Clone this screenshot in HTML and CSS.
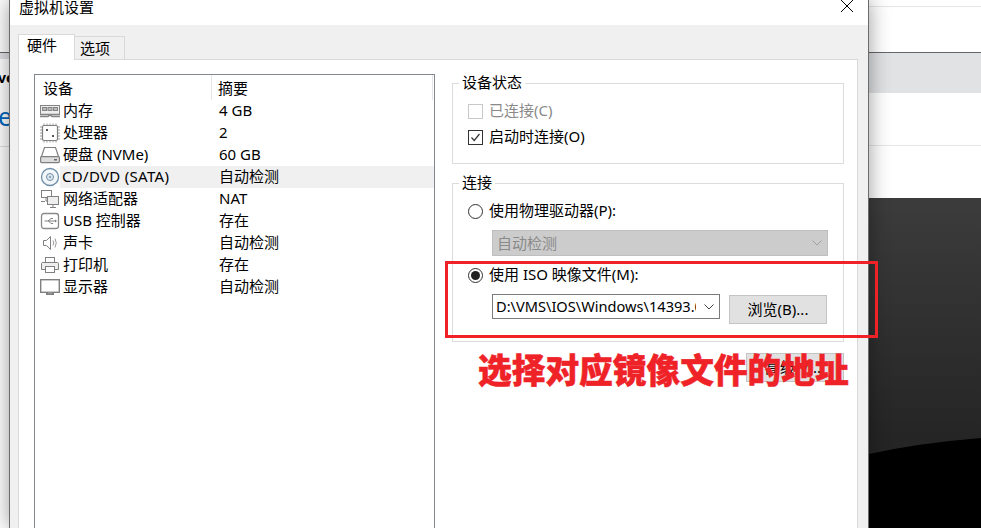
FILE: index.html
```html
<!DOCTYPE html>
<html lang="zh-CN">
<head>
<meta charset="utf-8">
<title>虚拟机设置</title>
<link rel="stylesheet" href="styles.css">
</head>
<body>
<div class="backdrop">
  <div class="bg-left">
    <div class="bl-top"></div>
    <div class="bl-band"></div>
    <div class="bl-name">ve</div>
    <div class="bl-link">e</div>
  </div>
  <div class="bg-right">
    <div class="br-a"></div>
    <div class="br-b"></div>
    <div class="br-band"></div>
    <div class="br-c"></div>
    <div class="br-d"></div>
    <div class="hero">
      <svg class="hero-curve" viewBox="0 0 112 90"><path d="M0 16Q50 5 112 0V90H0Z" fill="#000"/></svg>
    </div>
  </div>
</div>

<div class="dialog">
  <div class="titlebar">
    <span class="title">虚拟机设置</span>
    <svg class="close" viewBox="0 0 12 12"><path d="M0 0L12 12M12 0L0 12" stroke="#000" stroke-width="1" fill="none"/></svg>
  </div>
  <div class="client">
    <div class="tabs">
      <div class="tab active">硬件</div>
      <div class="tab">选项</div>
    </div>
    <div class="panel">
      <div class="list">
        <div class="list-head">
          <div class="hd-name">设备</div>
          <div class="hd-val">摘要</div>
        </div>
        <div class="row">
          <svg class="ic" viewBox="0 0 20 20"><g fill="none" stroke="#858585"><rect x="0.500" y="4.500" width="19" height="9" fill="#eee"/><rect x="2.500" y="6.500" width="4" height="3" fill="#bbb"/><rect x="8" y="6.500" width="4" height="3" fill="#bbb"/><rect x="13.500" y="6.500" width="4" height="3" fill="#bbb"/><path d="M0 13.500H20M0 15.500H8L9 14.500H11L12 15.500H20" stroke-width="1.400"/></g></svg>
          <div class="cells"><span class="name">内存</span><span class="val">4 GB</span></div>
        </div>
        <div class="row">
          <svg class="ic" viewBox="0 0 20 20"><g fill="none"><rect x="2.500" y="2.500" width="15" height="15" rx="1.500" fill="#fff" stroke="#808080" stroke-width="1.200"/><path d="M4 0.500V2M7 0.500V2M10 0.500V2M13 0.500V2M16 0.500V2M4 18V19.500M7 18V19.500M10 18V19.500M13 18V19.500M16 18V19.500M0 4H2M0 7H2M0 10H2M0 13H2M0 16H2M18 4H20M18 7H20M18 10H20M18 13H20M18 16H20" stroke="#999"/><rect x="6" y="6" width="2" height="2" fill="#555"/><rect x="12" y="12" width="2" height="2" fill="#555"/></g></svg>
          <div class="cells"><span class="name">处理器</span><span class="val">2</span></div>
        </div>
        <div class="row">
          <svg class="ic" viewBox="0 0 20 20"><g fill="none" stroke="#808080" stroke-width="1.200"><path d="M4.500 2.500H15.500L18.500 11.500H1.500Z" fill="#fff"/><rect x="0.600" y="11.600" width="18.800" height="6" rx="1" fill="#ddd"/></g><rect x="14" y="14" width="3" height="1.500" fill="#666"/></svg>
          <div class="cells"><span class="name">硬盘 (NVMe)</span><span class="val">60 GB</span></div>
        </div>
        <div class="row selected">
          <svg class="ic" viewBox="0 0 20 20"><g fill="none" stroke="#6f8fa8"><circle cx="10" cy="10" r="8.500" fill="#f4f7fa" stroke-width="1.300"/><circle cx="10" cy="10" r="3.500" fill="#dfe6ec"/></g><circle cx="10" cy="10" r="1" fill="#6f8fa8"/></svg>
          <div class="cells"><span class="name name-wide">CD/DVD (SATA)</span><span class="val">自动检测</span></div>
        </div>
        <div class="row">
          <svg class="ic" viewBox="0 0 20 20"><g fill="none" stroke="#808080"><rect x="1.500" y="1.500" width="10" height="7" fill="#fff"/><rect x="7.500" y="7.500" width="11" height="8" fill="#eee"/><path d="M13 15.500V18M10 18.500H16M6 8.500V12H7M1 12.500H5"/></g></svg>
          <div class="cells"><span class="name">网络适配器</span><span class="val">NAT</span></div>
        </div>
        <div class="row">
          <svg class="ic" viewBox="0 0 20 20"><rect x="1.500" y="2.500" width="17" height="15" rx="2.500" fill="#fff" stroke="#8a8a8a" stroke-width="1.300"/><path d="M4.500 10H15M8 10L11 7.500H13M8.500 10L11 12.500H13" fill="none" stroke="#808080"/><path d="M15 8.500L17 10L15 11.500Z" fill="#808080"/></svg>
          <div class="cells"><span class="name">USB 控制器</span><span class="val">存在</span></div>
        </div>
        <div class="row">
          <svg class="ic" viewBox="0 0 20 20"><path d="M3.500 7.500H6.500L10.500 3.500V16.500L6.500 12.500H3.500Z" fill="#fff" stroke="#808080"/><path d="M13 7.500Q14.500 10 13 12.500M15 5.500Q17.500 10 15 14.500" fill="none" stroke="#999"/></svg>
          <div class="cells"><span class="name">声卡</span><span class="val">自动检测</span></div>
        </div>
        <div class="row">
          <svg class="ic" viewBox="0 0 20 20"><g fill="none" stroke="#808080"><rect x="5.500" y="2.500" width="9" height="5" fill="#fff"/><path d="M5 14.500H1.500V8.500Q1.500 7.500 2.500 7.500H17.500Q18.500 7.500 18.500 8.500V14.500H15" fill="#eee"/><rect x="5.500" y="11.500" width="9" height="6" fill="#fff"/></g></svg>
          <div class="cells"><span class="name">打印机</span><span class="val">存在</span></div>
        </div>
        <div class="row">
          <svg class="ic" viewBox="0 0 20 20"><rect x="0.700" y="2.700" width="18.600" height="12.600" fill="#fff" stroke="#808080" stroke-width="1.400"/><path d="M6 17H14" stroke="#808080" stroke-width="2"/><path d="M8 16H12" stroke="#aaa"/></svg>
          <div class="cells"><span class="name">显示器</span><span class="val">自动检测</span></div>
        </div>
      </div>

      <div class="side">
        <fieldset class="group group-status">
          <legend>设备状态</legend>
          <div class="opt disabled"><span class="check"></span><span class="label">已连接(C)</span></div>
          <div class="opt"><span class="check on"><svg viewBox="0 0 13 13"><path d="M2.500 6.500L5.200 9.500L10.500 3" fill="none" stroke="#333" stroke-width="1.200"/></svg></span><span class="label">启动时连接(O)</span></div>
        </fieldset>
        <fieldset class="group group-conn">
          <legend>连接</legend>
          <div class="opt"><span class="radio"></span><span class="label">使用物理驱动器(P):</span></div>
          <div class="select off"><span class="sel-text">自动检测</span><svg class="chev" viewBox="0 0 10 6"><path d="M0.500 0.500L5 5L9.500 0.500" fill="none" stroke="#a0a0a0"/></svg></div>
          <div class="opt opt-iso"><span class="radio on"></span><span class="label">使用 ISO 映像文件(M):</span></div>
          <div class="iso-row">
            <div class="select file"><span class="sel-text">D:\VMS\IOS\Windows\14393.0</span><svg class="chev" viewBox="0 0 10 6"><path d="M0.500 0.500L5 5L9.500 0.500" fill="none" stroke="#444"/></svg></div>
            <div class="btn">浏览(B)...</div>
          </div>
        </fieldset>
        <div class="adv-row"><div class="btn">高级(V)...</div></div>
      </div>
    </div>
  </div>
</div>

<div class="mark-box"></div>
<div class="mark-text">选择对应镜像文件的地址</div>
</body>
</html>
```

FILE: styles.css
```css
* { box-sizing: border-box; }
html, body { margin: 0; height: 528px; overflow: hidden; background: #fff; }
body { position: relative; font-family: "Noto Sans", "Noto Sans CJK SC", sans-serif; font-size: 15px; color: #000; }

.backdrop { display: flex; height: 528px; }
.bg-left { width: 400px; display: flex; flex-direction: column; overflow: hidden; }
.bl-top { height: 53px; border-bottom: 1px solid #666; }
.bl-band { height: 6px; background: #e1e2e4; }
.bl-name { font-weight: 700; font-size: 14px; line-height: 20px; margin: 9px 0 0 -2px; }
.bl-link { color: #0067c0; font-size: 25px; line-height: 30px; margin: 13px 0 0 -2px; padding-bottom: 15px; border-bottom: 1px solid #e0e0e0; }
.bg-right { flex: 1; display: flex; flex-direction: column; }
.br-a { height: 7px; border-bottom: 1px solid #e6e6e6; }
.br-b { height: 46px; border-bottom: 1px solid #666; }
.br-band { height: 40px; background: #e1e2e4; }
.br-c { height: 53px; border-bottom: 1px solid #e6e6e6; }
.br-d { height: 52px; }
.hero { flex: 1; position: relative; background: linear-gradient(#3c3c3c, #252525 240px); }
.hero-curve { position: absolute; right: 0; bottom: 0; width: 112px; height: 90px; display: block; }

.dialog { position: absolute; left: 9px; top: 0; width: 860px; height: 528px; display: flex; flex-direction: column; background: #f0f0f0; border-left: 1px solid #6b6b6b; border-right: 1px solid #6b6b6b; box-shadow: 0 0 20px rgba(0,0,0,.4); overflow: hidden; }
.titlebar { height: 25px; background: #fff; display: flex; justify-content: space-between; padding: 0 15px 0 9px; flex: none; }
.title { font-size: 15px; line-height: 14px; }
.close { width: 12px; height: 12px; display: block; }
.client { flex: 1; padding: 9px 10px 0 8px; display: flex; flex-direction: column; min-height: 0; }
.tabs { display: flex; align-items: flex-end; height: 26px; flex: none; position: relative; z-index: 1; margin-bottom: -1px; }
.tab { width: 50px; height: 24px; padding-left: 5px; line-height: 22px; background: #f0f0f0; border: 1px solid #d9d9d9; border-left: 0; }
.tab.active { width: 57px; height: 26px; padding-left: 8px; line-height: 20px; background: #fff; border-left: 1px solid #d9d9d9; border-bottom: 0; }
.panel { flex: 1; background: #fff; border: 1px solid #d9d9d9; border-bottom: 0; padding: 13px 0 0 15px; display: flex; gap: 17px; min-height: 0; }

.list { width: 401px; height: 520px; flex: none; margin-top: 1px; border: 1px solid #828790; }
.list-head { display: flex; height: 25px; line-height: 27px; }
.hd-name { width: 177px; padding-left: 8px; border-right: 1px solid #e5e5e5; }
.hd-val { flex: 1; padding-left: 6px; border-right: 1px solid #e5e5e5; margin-right: 1px; }
.row { display: flex; align-items: center; height: 22px; padding-left: 5px; }
.ic { width: 20px; height: 20px; flex: none; display: block; }
.cells { flex: 1; display: flex; height: 22px; line-height: 20px; }
.row.selected .cells { background: #f0f0f0; }
.name { width: 152px; padding-left: 3px; flex: none; }
.name-wide { padding-left: 2px; letter-spacing: .3px; }
.val { padding-left: 7px; }

.side { width: 392px; flex: none; display: flex; flex-direction: column; }
.group { margin: 0; border: 1px solid #dcdcdc; padding: 5px 0 0 15px; min-width: 0; }
.group legend { padding: 0 3px; margin-left: -9px; line-height: 18px; height: 20px; }
.group-status { height: 91px; }
.group-conn { height: 169px; margin-top: 9px; }
.opt { display: flex; align-items: center; gap: 6px; height: 26px; }
.label { padding-bottom: 3px; }
.disabled { color: #8a8a8a; }
.opt-iso { margin-top: 6px; }
.check { width: 15px; height: 15px; border: 1px solid #333; background: #fff; display: block; flex: none; }
.check svg { display: block; width: 13px; height: 13px; }
.disabled .check { border-color: #c8c8c8; }
.radio { width: 15px; height: 15px; border: 1px solid #333; border-radius: 50%; background: #fff; flex: none; display: flex; align-items: center; justify-content: center; }
.radio.on::after { content: ""; width: 9px; height: 9px; border-radius: 50%; background: #222; }
.select { display: flex; align-items: center; justify-content: space-between; margin-left: 24px; height: 26px; }
.select.off { width: 336px; margin-top: 6px; background: #ccc; border: 1px solid #bfbfbf; color: #8a8a8a; padding: 0 5px 0 4px; }
.select.off .sel-text { padding-bottom: 2px; }
.chev { width: 10px; height: 6px; display: block; flex: none; }
.iso-row { display: flex; align-items: flex-start; gap: 9px; margin: 6px 0 0 24px; }
.select.file { margin-left: 0; width: 228px; height: 25px; background: #fff; border: 1px solid #7a7a7a; padding: 0 5px 0 3px; font-size: 14.6px; }
.select.file .sel-text { width: 200px; overflow: hidden; white-space: nowrap; padding-bottom: 1px; }
.btn { width: 98px; height: 29px; background: #e1e1e1; border: 1px solid #c4c4c4; text-align: center; line-height: 27px; }
.iso-row .btn { margin-top: 1px; }
.adv-row { display: flex; justify-content: flex-end; margin-top: 11px; }

.mark-box { position: absolute; left: 445px; top: 261px; width: 433px; height: 77px; border: 3px solid #ee2227; }
.mark-text { position: absolute; left: 478px; top: 346px; font-family: "Noto Sans CJK SC", sans-serif; font-weight: 900; font-size: 33.7px; line-height: 46px; color: #ee2227; white-space: nowrap; -webkit-text-stroke: .5px #ee2227; }
```
